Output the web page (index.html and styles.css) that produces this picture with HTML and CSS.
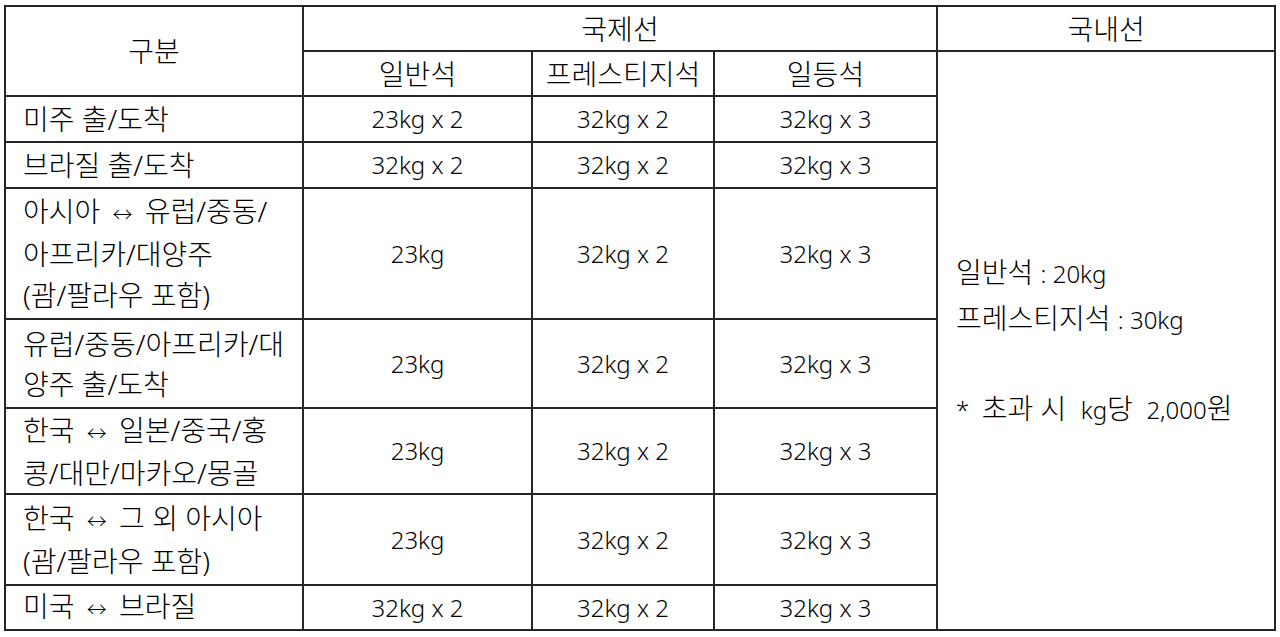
FILE: index.html
```html
<!DOCTYPE html>
<html lang="ko">
<head>
<meta charset="utf-8">
<link rel="stylesheet" href="styles.css">
</head>
<body>
<table class="bag">
  <colgroup>
    <col class="c1"><col class="c2"><col class="c3"><col class="c4"><col class="c5">
  </colgroup>
  <tr class="h1">
    <td rowspan="2" class="ctr">구분</td>
    <td colspan="3" class="ctr">국제선</td>
    <td class="ctr">국내선</td>
  </tr>
  <tr class="h2">
    <td class="ctr">일반석</td>
    <td class="ctr">프레스티지석</td>
    <td class="ctr">일등석</td>
    <td rowspan="8" class="dom">
      <div class="ln">일반석 <span class="lat">: 20kg</span></div>
      <div class="ln">프레스티지석 <span class="lat">: 30kg</span></div>
      <div class="ln">&nbsp;</div>
      <div class="ln pre"><span class="lat">*  </span>초과 시  <span class="lat">kg</span>당 <span class="lat"> 2,000</span>원</div>
    </td>
  </tr>
  <tr class="r1">
    <td class="lbl">미주 출/도착</td>
    <td class="ctr num">23kg x 2</td>
    <td class="ctr num">32kg x 2</td>
    <td class="ctr num">32kg x 3</td>
  </tr>
  <tr class="r2">
    <td class="lbl">브라질 출/도착</td>
    <td class="ctr num">32kg x 2</td>
    <td class="ctr num">32kg x 2</td>
    <td class="ctr num">32kg x 3</td>
  </tr>
  <tr class="r3">
    <td class="lbl tall">아시아 <span class="arr">↔</span> 유럽/중동/<br>아프리카/대양주<br>(괌/팔라우 포함)</td>
    <td class="ctr num">23kg</td>
    <td class="ctr num">32kg x 2</td>
    <td class="ctr num">32kg x 3</td>
  </tr>
  <tr class="r4">
    <td class="lbl">유럽/중동/아프리카/대<br>양주 출/도착</td>
    <td class="ctr num">23kg</td>
    <td class="ctr num">32kg x 2</td>
    <td class="ctr num">32kg x 3</td>
  </tr>
  <tr class="r5">
    <td class="lbl">한국 <span class="arr">↔</span> 일본/중국/홍<br>콩/대만/마카오/몽골</td>
    <td class="ctr num">23kg</td>
    <td class="ctr num">32kg x 2</td>
    <td class="ctr num">32kg x 3</td>
  </tr>
  <tr class="r6">
    <td class="lbl tall">한국 <span class="arr">↔</span> 그 외 아시아<br>(괌/팔라우 포함)</td>
    <td class="ctr num">23kg</td>
    <td class="ctr num">32kg x 2</td>
    <td class="ctr num">32kg x 3</td>
  </tr>
  <tr class="r7">
    <td class="lbl">미국 <span class="arr">↔</span> 브라질</td>
    <td class="ctr num">32kg x 2</td>
    <td class="ctr num">32kg x 2</td>
    <td class="ctr num">32kg x 3</td>
  </tr>
</table>
</body>
</html>
```
FILE: styles.css
```css
html, body {
  margin: 0;
  padding: 0;
  background: #ffffff;
}
body {
  padding: 5px 0 0 4px;
  font-family: "Noto Sans", "Noto Sans CJK KR", sans-serif;
  font-size: 28px;
  font-weight: 300;
  color: #000000;
}
.bag {
  border-collapse: collapse;
  table-layout: fixed;
  width: 1270px;
}
.c1 { width: 298px; }
.c2 { width: 229px; }
.c3 { width: 182px; }
.c4 { width: 223px; }
.c5 { width: 338px; }
.bag td {
  border: 2px solid #262626;
  padding: 0;
  vertical-align: middle;
  line-height: 40px;
}
.ctr { text-align: center; }
.num { font-size: 24px; }
.lat { font-size: 24px; }
.lbl {
  text-align: left;
  padding-left: 17px !important;
}
.tall { line-height: 41px !important; }
.arr {
  font-family: "Noto Sans CJK KR", sans-serif;
  font-size: 20px;
  padding: 0 5px;
}
.dom {
  padding-left: 18px !important;
  text-align: left;
}
.ln { line-height: 44px; }
.pre { white-space: pre; }
.h1 { height: 45px; }
.h2 { height: 45px; }
.r1 { height: 46px; }
.r2 { height: 46px; }
.r3 { height: 131px; }
.r4 { height: 89px; }
.r5 { height: 86px; }
.r6 { height: 91px; }
.r7 { height: 44px; }
```
